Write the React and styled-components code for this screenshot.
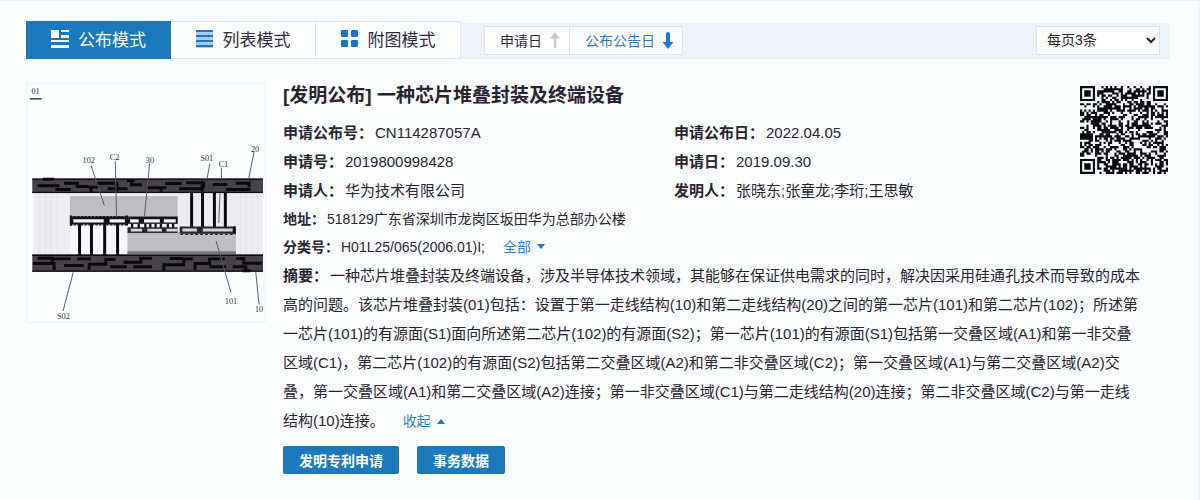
import { useState } from 'react';
import styled, { createGlobalStyle } from 'styled-components';

const TABS = [
  { id: 'publish', name: '公布模式', Icon: PublishIcon },
  { id: 'list', name: '列表模式', Icon: ListIcon },
  { id: 'figure', name: '附图模式', Icon: GridIcon },
];

const FIELDS = [
  ['申请公布号', 'CN114287057A'],
  ['申请公布日', '2022.04.05'],
  ['申请号', '2019800998428'],
  ['申请日', '2019.09.30'],
  ['申请人', '华为技术有限公司'],
  ['发明人', '张晓东;张童龙;李珩;王思敏'],
];

const COMMA = '\uff0c';
const COLON = '\uff1a';
const SEMICOLON = '\uff1b';

const ABSTRACT = [
  '一种芯片堆叠封装及终端设备',
  COMMA,
  '涉及半导体技术领域',
  COMMA,
  '其能够在保证供电需求的同时',
  COMMA,
  '解决因采用硅通孔技术而导致的成本高的问题。该芯片堆叠封装(01)包括',
  COLON,
  '设置于第一走线结构(10)和第二走线结构(20)之间的第一芯片(101)和第二芯片(102)',
  SEMICOLON,
  '所述第一芯片(101)的有源面(S1)面向所述第二芯片(102)的有源面(S2)',
  SEMICOLON,
  '第一芯片(101)的有源面(S1)包括第一交叠区域(A1)和第一非交叠区域(C1)',
  COMMA,
  '第二芯片(102)的有源面(S2)包括第二交叠区域(A2)和第二非交叠区域(C2)',
  SEMICOLON,
  '第一交叠区域(A1)与第二交叠区域(A2)交叠',
  COMMA,
  '第一交叠区域(A1)和第二交叠区域(A2)连接',
  SEMICOLON,
  '第一非交叠区域(C1)与第二走线结构(20)连接',
  SEMICOLON,
  '第二非交叠区域(C2)与第一走线结构(10)连接。',
].join('');

function App() {
  const [mode, setMode] = useState('publish');

  return (
    <Page>
      <GlobalStyle />
      <Toolbar>
        <Tabs>
          {TABS.map(({ id, name, Icon }) => (
            <Tab key={id} $active={mode === id} onClick={() => setMode(id)}>
              <Icon />
              {name}
            </Tab>
          ))}
        </Tabs>
        <SortGroup>
          <SortButton>
            申请日
            <ArrowIcon color="#c9c9cd" />
          </SortButton>
          <SortButton $active>
            公布公告日
            <ArrowIcon color="#1a78d0" down />
          </SortButton>
        </SortGroup>
        <PageSize aria-label="每页条数" defaultValue="3">
          <option value="3">每页3条</option>
          <option value="10">每页10条</option>
          <option value="20">每页20条</option>
        </PageSize>
      </Toolbar>

      <Item>
        <Figure>
          <ChipFigure />
        </Figure>
        <Info>
          <Head>
            <HeadText>
              <Title>[发明公布] 一种芯片堆叠封装及终端设备</Title>
              <Fields>
                {FIELDS.map(([label, value]) => (
                  <Field key={label}>
                    <Label>{label + COLON}</Label>
                    {value}
                  </Field>
                ))}
              </Fields>
            </HeadText>
            <QrCode />
          </Head>
          <SmallField>
            <Label>{`地址${COLON}`}</Label>
            518129广东省深圳市龙岗区坂田华为总部办公楼
          </SmallField>
          <SmallField>
            <Label>{`分类号${COLON}`}</Label>
            H01L25/065(2006.01)I;
            <Toggle href="#all">
              全部
              <Caret />
            </Toggle>
          </SmallField>
          <Abstract>
            <Label>{`摘要${COLON}`}</Label>
            {ABSTRACT}
            <Toggle href="#fold">
              收起
              <Caret up />
            </Toggle>
          </Abstract>
          <Actions>
            <ActionButton>发明专利申请</ActionButton>
            <ActionButton>事务数据</ActionButton>
          </Actions>
        </Info>
      </Item>
    </Page>
  );
}

export default App;

function PublishIcon() {
  return (
    <svg width="18" height="18" viewBox="0 0 18 18" fill="#fff">
      <path d="M0 0h8v8H0zM10 0h8v2h-8zM10 5h8v3h-8zM0 10h18v2H0zM0 15h18v3H0z" />
    </svg>
  );
}

function ListIcon() {
  return (
    <svg width="18" height="18" viewBox="0 0 18 18">
      <path fill="#a9cdf0" d="M0 0h17v18H0z" />
      <path fill="#2b73b8" d="M0 0h17v2H0zM0 5h17v2H0zM0 10h17v2H0zM0 15h17v2H0z" />
    </svg>
  );
}

function GridIcon() {
  return (
    <svg width="18" height="18" viewBox="0 0 18 18" fill="#1a72c4">
      <rect x="0" y="0" width="7" height="7" rx="1" />
      <rect x="10" y="0" width="7" height="7" rx="1" />
      <rect x="0" y="10" width="7" height="7" rx="1" />
      <rect x="10" y="10" width="7" height="7" rx="1" />
    </svg>
  );
}

function ArrowIcon({ color, down }) {
  return (
    <svg width="12" height="17" viewBox="0 0 12 17" fill={color}>
      {down ? (
        <path d="M4 1.5Q4 0 6 0T8 1.5V10h3.4L6 17 .6 10H4z" />
      ) : (
        <path d="M6 0 11 6.5H7.2V16H4.8V6.5H1z" />
      )}
    </svg>
  );
}

function Caret({ up }) {
  return (
    <svg width="8" height="6" viewBox="0 0 8 6" fill="#1a78c8">
      <path d={up ? 'M4 1 8 6H0z' : 'M0 0h8L4 5z'} />
    </svg>
  );
}

const QR_SIZE = 41;

function inFinder(x, y) {
  const far = QR_SIZE - 8;
  return (x < 8 && y < 8) || (x >= far && y < 8) || (x < 8 && y >= far);
}

function qrPath() {
  let seed = 20227;
  let d = '';
  for (let y = 0; y < QR_SIZE; y += 1) {
    for (let x = 0; x < QR_SIZE; x += 1) {
      seed = (seed * 1103515245 + 12345) % 2147483648;
      if (!inFinder(x, y) && (seed >> 12) % 100 < 56) d += `M${x} ${y}h1v1h-1z`;
    }
  }
  return d;
}

function QrCode() {
  const far = QR_SIZE - 7;
  return (
    <Qr viewBox={`0 0 ${QR_SIZE} ${QR_SIZE}`} role="img">
      <path d={qrPath()} />
      {[
        [0, 0],
        [far, 0],
        [0, far],
      ].map(([x, y]) => (
        <path
          key={`${x}-${y}`}
          fillRule="evenodd"
          d={`M${x} ${y}h7v7h-7zm1 1v5h5v-5zm1 1h3v3h-3z`}
        />
      ))}
    </Qr>
  );
}

// routing layer: dark bar with staggered black traces
function Layer({ y, height, traces }) {
  return (
    <g>
      <rect x="34" y={y} width="698" height={height} fill="#454346" />
      <path d={traces} fill="none" stroke="#0b0a0c" strokeWidth="9" />
      <path d={`M34 ${y + 2}h698M34 ${y + height - 2}h698`} stroke="#0b0a0c" strokeWidth="4" />
    </g>
  );
}

function ChipFigure() {
  return (
    <svg width="100%" viewBox="18 9 720 720" role="img">
      <rect x="36" y="334" width="694" height="196" fill="#ededf0" />
      <path
        d="M56 340v184M74 340v184M92 340v184M110 340v184M664 340v184M682 340v184M700 340v184M716 340v184"
        stroke="#e4e4e8"
        strokeWidth="3"
      />
      <rect x="148" y="434" width="174" height="92" fill="#f7f7fa" />
      <rect x="148" y="348" width="326" height="64" fill="#bebdbf" />
      <rect x="322" y="458" width="328" height="66" fill="#bebdbf" />
      <path d="M322 519h328" stroke="#777579" strokeWidth="8" />

      <Layer
        y={295}
        height={44}
        traces="M50 317h66M66 297h34M104 328h46M130 309h40v10h34M212 318v18M200 321h34M228 309h62v12M288 318v18M262 326h60M320 301h24M334 300v14h32M380 323h60M424 318v16M436 310h50M478 326h70M500 308h52v16M548 306v28M580 313h44M620 328h74M650 309h40v12"
      />
      <Layer
        y={525}
        height={52}
        traces="M50 536h44v12M36 552h64v20M96 538h54M130 558h60M206 572v-18h50v-14h30M170 538h42M270 562h50M310 548h52v-12h34M340 562h56M432 574v-18h60v-18h28M450 537h40M526 572v-20h44v-14h46M570 562h50M650 537h24v14h54M640 562h40v12M670 574h24"
      />

      {/* copper pillars */}
      <path d="M177 432v94M213 432v94M253 432v94M292 432v94" stroke="#0b0a0c" strokeWidth="9" />
      <path d="M516 336v106M549 336v106M585 336v106M618 336v106" stroke="#0b0a0c" strokeWidth="9" />

      {/* pads of the two dies */}
      <rect x="148" y="410" width="326" height="24" fill="#151317" />
      <path d="M158 418h92v10h-92zM268 418h46v10h-46zM330 418h26v10h-26zM372 418h48v10h-48zM432 418h36v10h-36z" fill="#f2f2f5" />
      <path d="M148 410h174M148 435h174" stroke="#151317" strokeWidth="4" strokeDasharray="7 4" />
      <rect x="322" y="432" width="152" height="14" fill="#f2f2f5" />
      <path d="M336 432v16M356 432v16M376 432v16M391 432v16M407 432v16M423 432v16M444 432v16M460 432v16" stroke="#151317" strokeWidth="7" />
      <path d="M322 442h152v18H322zM480 440h170v22H480z" fill="#29272b" />
      <path d="M332 447h34v8h-34zM382 447h44v8h-44zM440 447h34v8h-34zM488 446h44v9h-44zM550 446h90v9h-90z" fill="#d6d5d8" />
      <path d="M482 464h166" stroke="#151317" strokeWidth="4" strokeDasharray="8 7" />
      <path d="M151 407v30M320 407v30M645 440v22" stroke="#151317" strokeWidth="7" />

      {/* leader lines */}
      <path
        d="M212 256l40 120M285 242l4 168M389 250l-16 160M571 250l-8 44M606 262v34M602 340l-4 90M705 214l-16 80M158 578l-31 118M590 484l45 155M710 578l10 98"
        fill="none"
        stroke="#5d5b62"
        strokeWidth="3"
      />
      <path d="M26 54h36" stroke="#222" strokeWidth="4" />
      <g fontFamily="'Liberation Serif', serif" fontSize="25" fill="#333138" textAnchor="middle">
        <text x="44" y="40">01</text>
        <text x="205" y="248">102</text>
        <text x="283" y="240">C2</text>
        <text x="390" y="248">30</text>
        <text x="562" y="242">S01</text>
        <text x="613" y="260">C1</text>
        <text x="708" y="216">20</text>
        <text x="128" y="719">S02</text>
        <text x="635" y="674">101</text>
        <text x="720" y="700">10</text>
      </g>
    </svg>
  );
}

const GlobalStyle = createGlobalStyle`
  * {
    box-sizing: border-box;
  }

  body {
    margin: 0;
    background-color: #fcfdff;
    color: #29242f;
    font-family: 'Liberation Sans', 'Noto Sans CJK SC', sans-serif;
  }

  button, select {
    font-family: inherit;
  }
`;

const Page = styled.main`
  min-height: 100vh;
  padding: 20px 28px 24px 26px;

  border-top: 1px solid #eef0f4;
  border-right: 2px solid #f3f4f5;
`;

const Toolbar = styled.div`
  display: flex;
  align-items: center;

  padding-right: 10px;
  background: linear-gradient(transparent 2px, #eff3fc 2px);
`;

const Tabs = styled.div`
  display: flex;
`;

const Tab = styled.button`
  display: flex;
  align-items: center;
  justify-content: center;
  gap: 9px;

  width: 145px;
  height: 38px;
  padding: 0 0 3px;

  border: 1px solid ${(props) => (props.$active ? '#1c79bb' : '#e3e6eb')};
  background-color: ${(props) => (props.$active ? '#1c79bb' : '#fdfeff')};
  color: ${(props) => (props.$active ? '#fff' : '#2f2a38')};
  font-size: 17px;
  cursor: pointer;

  & + & {
    border-left: 0;
  }
`;

const SortGroup = styled.div`
  display: flex;
  margin-left: 23px;
`;

const SortButton = styled.button`
  display: flex;
  align-items: center;
  gap: 7px;

  height: 29px;
  padding: 0 8px 0 15px;

  border: 1px solid #dfe3ea;
  background-color: #fff;
  color: ${(props) => (props.$active ? '#2f78c8' : '#2f2a38')};
  font-size: 14px;
  cursor: pointer;

  & + & {
    border-left: 0;
  }
`;

const PageSize = styled.select`
  width: 124px;
  height: 29px;
  margin-left: auto;
  padding: 0 4px 0 6px;

  border: 1px solid #dfe3ea;
  background-color: #fff;
  color: #29242f;
  font-size: 14px;
`;

const Item = styled.article`
  display: flex;
  align-items: flex-start;
  gap: 17px;
  margin-top: 24px;
`;

const Figure = styled.div`
  flex: none;
  width: 240px;
  border: 1px solid #f0f2f6;

  svg {
    display: block;
  }
`;

const Info = styled.div`
  flex: 1;
  min-width: 0;
`;

const Head = styled.div`
  display: flex;
  align-items: flex-start;
`;

const HeadText = styled.div`
  flex: 1;
`;

const Title = styled.h1`
  margin: 0 0 10px;
  font-size: 19px;
  font-weight: 700;
  line-height: 25px;
`;

const Fields = styled.div`
  display: grid;
  grid-template-columns: minmax(0, 391px) 1fr;
`;

const Field = styled.div`
  font-size: 15px;
  line-height: 29px;
`;

const SmallField = styled.div`
  font-size: 14px;
  line-height: 28px;
`;

const Label = styled.b`
  margin-right: 2px;
`;

const Qr = styled.svg`
  flex: none;
  width: 88px;
  height: 88px;
  margin: 3px 2px 0 0;
  fill: #0d0b12;
`;

const Toggle = styled.a`
  display: inline-flex;
  align-items: center;
  gap: 6px;
  margin-left: 18px;

  color: #2f7fd0;
  font-size: 14px;
  line-height: 20px;
  text-decoration: none;
`;

const Abstract = styled.p`
  max-width: 860px;
  margin: 0;

  font-size: 15px;
  line-height: 29px;
`;

const Actions = styled.div`
  display: flex;
  gap: 18px;
  margin-top: 11px;
`;

const ActionButton = styled.button`
  height: 28px;
  padding: 0 16px;

  border: 0;
  border-radius: 2px;
  background-color: #1c79bb;
  color: #fff;
  font-size: 14px;
  font-weight: 600;
  cursor: pointer;
`;
